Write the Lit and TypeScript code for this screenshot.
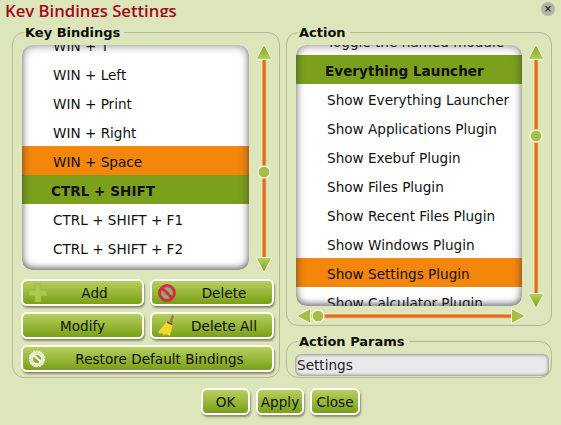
import { LitElement, html, css, svg } from "lit";
import { customElement } from "lit/decorators.js";

type Row = { t: string; k?: "sel" | "head" };

const leftRows: Row[] = [
  { t: "WIN + T" }, { t: "WIN + Left" }, { t: "WIN + Print" }, { t: "WIN + Right" },
  { t: "WIN + Space", k: "sel" }, { t: "CTRL + SHIFT", k: "head" },
  { t: "CTRL + SHIFT + F1" }, { t: "CTRL + SHIFT + F2" },
];
const rightRows: Row[] = [
  { t: "Toggle the named module" }, { t: "Everything Launcher", k: "head" },
  { t: "Show Everything Launcher" }, { t: "Show Applications Plugin" },
  { t: "Show Exebuf Plugin" }, { t: "Show Files Plugin" }, { t: "Show Recent Files Plugin" },
  { t: "Show Windows Plugin" }, { t: "Show Settings Plugin", k: "sel" }, { t: "Show Calculator Plugin" },
];

const defs = svg`<defs><linearGradient id="ar" x1="0" y1="0" x2="0" y2="1"><stop offset="0" stop-color="#7fa31c"/><stop offset="1" stop-color="#b5cf58"/></linearGradient>
<linearGradient id="ad" x1="0" y1="0" x2="0" y2="1"><stop offset="0" stop-color="#b5cf58"/><stop offset="1" stop-color="#7fa31c"/></linearGradient></defs>`;

function vbar(h: number, thumb: number) {
  return html`<svg class="bar" width="18" height=${h} viewBox="0 0 18 ${h}">
    ${defs}
    <rect x="9" y="10" width="2.500" height=${h - 20} fill="#c4c8a8"/>
    <rect x="7.500" y="10" width="3" height=${h - 20} fill="#f0640a"/>
    <path d="M9 .5 L17 15.500 H1 Z" fill="url(#ar)" stroke="#f4f6e6" stroke-width="1"/>
    <path d="M1 ${h - 15.5} H17 L9 ${h - 0.5} Z" fill="url(#ad)" stroke="#f4f6e6" stroke-width="1"/>
    <circle cx="9" cy=${thumb} r="6" fill="#a3bf44" stroke="#f2f4e2" stroke-width="1.400"/>
  </svg>`;
}

function hbar() {
  return html`<svg class="hbar" width="230" height="18" viewBox="0 0 230 18">
    ${defs}
    <rect x="10" y="9" width="210" height="2.500" fill="#c4c8a8"/>
    <rect x="10" y="7.500" width="210" height="3" fill="#f0640a"/>
    <path d="M.5 9 L14.500 1.500 V16.500 Z" fill="#a3bf44" stroke="#f4f6e6"/>
    <path d="M229.500 9 L215.500 1.500 V16.500 Z" fill="#a3bf44" stroke="#f4f6e6"/>
    <circle cx="22" cy="9" r="6" fill="#a3bf44" stroke="#f2f4e2" stroke-width="1.400"/>
  </svg>`;
}

const plus = html`<svg class="ico" width="20" height="20" viewBox="0 0 20 20"><path d="M7 1 H13 V7 H19 V13 H13 V19 H7 V13 H1 V7 H7 Z" fill="#a8c84e" stroke="#94b53a" stroke-width=".6"/></svg>`;
const noEntry = html`<svg class="ico" width="20" height="20" viewBox="0 0 20 20"><circle cx="10" cy="10" r="7.400" fill="#9aa878" stroke="#cf2f3f" stroke-width="3"/><path d="M5 5 L15 15" stroke="#cf2f3f" stroke-width="3"/></svg>`;
const broom = html`<svg class="ico" width="20" height="24" viewBox="0 0 20 24"><path d="M12 8 L15 1 L17 2 L15 9 Z" fill="#a87a3a"/><path d="M10 7 L16 10 L13 22 L8 20 L7 22 L5 19 L3 20 L1 18 Z" fill="#f2d92c" stroke="#c9a81c" stroke-width=".5"/><path d="M10 8 L15.500 10.500" stroke="#555" stroke-width="1.500"/></svg>`;
const restore = html`<svg class="ico" width="18" height="18" viewBox="0 0 18 18"><circle cx="9" cy="9" r="7.500" fill="#dfe6c4" stroke="#f5f7ea" stroke-width="1.500" stroke-dasharray="2 .6"/><circle cx="9" cy="9" r="4.600" fill="#8fae35" stroke="#fff" stroke-width="1"/><path d="M5.500 5 L13 12" stroke="#fff" stroke-width="1.800"/></svg>`;

@customElement("app-root")
export class AppRoot extends LitElement {
  static styles = css`
    :host { display: block; width: 561px; height: 425px; overflow: hidden; position: relative;
      background: #dde5ba; font-family: "DejaVu Sans", sans-serif; font-size: 13.6px; color: #111; }
    .title { height: 17px; overflow: hidden; padding-left: 5px; font-family: "Open Sans", sans-serif;
      font-weight: 600; font-size: 16.700px; line-height: 21px; color: #a00a1c; white-space: nowrap; }
    .x { position: absolute; left: 541px; top: 2px; width: 14px; height: 14px; border-radius: 50%;
      background: #b2b7a4; color: #333; font: bold 10px/13px "DejaVu Sans", sans-serif; text-align: center; }
    .main { display: grid; grid-template-columns: 268px 266px; column-gap: 6px; padding: 8px 0 0 12px; }
    .col { display: flex; flex-direction: column; gap: 8px; }
    fieldset { margin: 0; padding: 5px 0 0 9px; border: 1px solid #b3bb94; border-radius: 12px; min-width: 0; }
    legend { padding: 0 4px 0 1px; margin-left: 2px; font-weight: bold; font-size: 13px; line-height: 15px; color: #0c0c0c; }
    .key { height: 346px; }
    .action { height: 294px; }
    .params { height: 37px; padding: 5px 0 0 8px; }
    .params legend { margin-left: 3px; }
    .top { display: flex; align-items: flex-start; }
    .list { position: relative; overflow: hidden; background: #fff; border-radius: 10px; flex: none; }
    .list::after { content: ""; position: absolute; inset: 0; border-radius: 10px; pointer-events: none;
      box-shadow: inset 0 0 9px 1px rgba(60,60,60,.55), inset 0 -3px 4px rgba(60,60,60,.35); }
    .l1 { width: 227px; height: 225px; }
    .l2 { width: 226px; height: 261px; }
    .rows { display: flex; flex-direction: column; }
    .l1 .rows { margin-top: -15px; }
    .l2 .rows { margin-top: -19px; }
    .row { flex: none; height: 29px; line-height: 33px; white-space: nowrap; padding-left: 31px; }
    .sel { background: #f4860c; }
    .head { background: #7ba01b; font-weight: bold; padding-left: 29px; }
    .bar { flex: none; margin-left: 6px; margin-top: -1px; display: block; }
    .l2 + .bar { margin-left: 5px; }
    .hbar { display: block; margin-top: -2px; }
    .btns { display: grid; grid-template-columns: 123px 124px; gap: 6px; margin-top: 6px; margin-left: -1px; width: 254px; }
    button { position: relative; display: flex; align-items: center; justify-content: center; height: 27px; padding: 0;
      font: 13.600px "DejaVu Sans", sans-serif; color: #111; border: 2px solid #fff; border-radius: 6px;
      background: linear-gradient(#b6d05e, #7a9f17); box-shadow: 1px 2px 2px rgba(70,70,50,.55); }
    .has { padding-left: 24px; }
    .wide { grid-column: span 2; }
    .ico { position: absolute; left: 5px; top: 50%; transform: translateY(-50%); }
    .input { width: 254px; height: 22px; box-sizing: border-box; background: #e9e9e9; border-radius: 6px;
      box-shadow: inset 0 0 3px 1px rgba(90,90,90,.6); line-height: 22px; padding-left: 2px; color: #222; }
    .foot { display: flex; gap: 6px; padding: 10px 0 0 201px; }
    .foot button { width: 49px; }
    .foot .apply { width: 48px; }
    .foot .close { width: 50px; }
  `;

  private rows(list: Row[]) {
    return html`<div class="rows">${list.map((r) => html`<div class="row ${r.k ?? ""}">${r.t}</div>`)}</div>`;
  }

  render() {
    return html`
      <div class="title">Key Bindings Settings</div>
      <div class="x">×</div>
      <div class="main">
        <fieldset class="key">
          <legend>Key Bindings</legend>
          <div class="top">
            <div class="list l1">${this.rows(leftRows)}</div>
            ${vbar(229, 128)}
          </div>
          <div class="btns">
            <button class="has">${plus}Add</button>
            <button class="has">${noEntry}Delete</button>
            <button>Modify</button>
            <button class="has">${broom}Delete All</button>
            <button class="wide has">${restore}Restore Default Bindings</button>
          </div>
        </fieldset>
        <div class="col">
          <fieldset class="action">
            <legend>Action</legend>
            <div class="top">
              <div class="list l2">${this.rows(rightRows)}</div>
              ${vbar(265, 92)}
            </div>
            ${hbar()}
          </fieldset>
          <fieldset class="params">
            <legend>Action Params</legend>
            <div class="input">Settings</div>
          </fieldset>
        </div>
      </div>
      <div class="foot">
        <button>OK</button><button class="apply">Apply</button><button class="close">Close</button>
      </div>
    `;
  }
}
